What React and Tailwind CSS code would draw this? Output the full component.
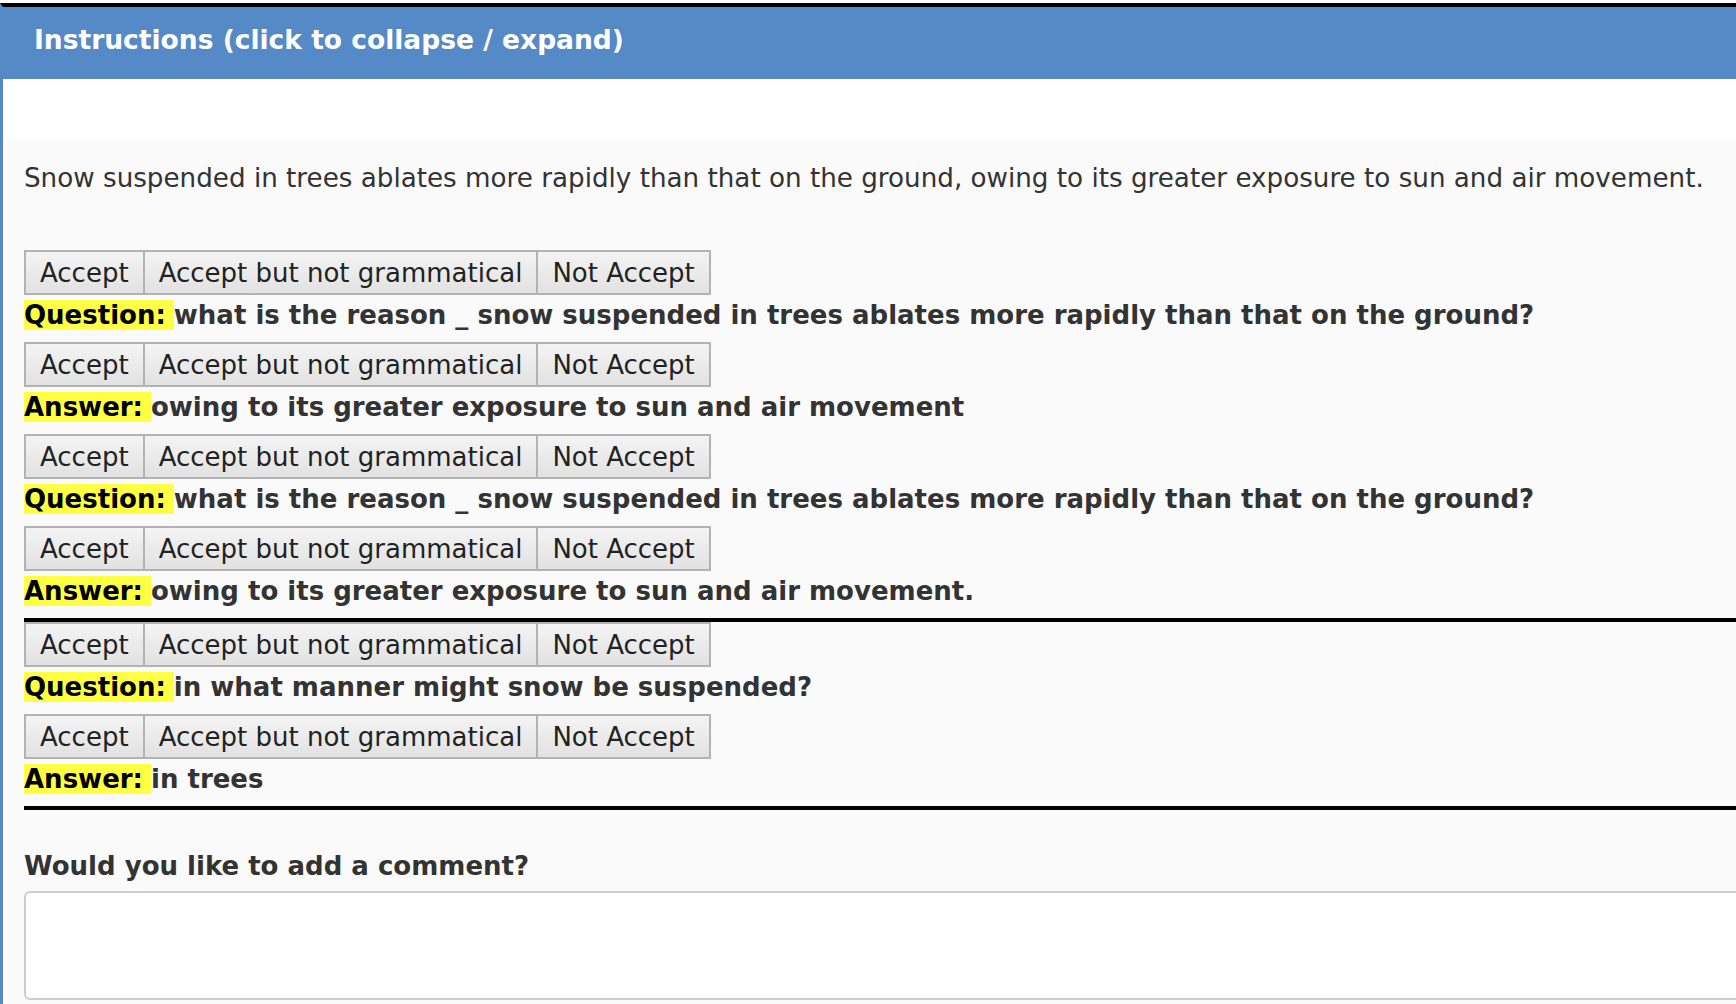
import React from 'react';

const ITEMS = [
  { label: 'Question:', text: 'what is the reason _ snow suspended in trees ablates more rapidly than that on the ground?' },
  { label: 'Answer:', text: 'owing to its greater exposure to sun and air movement' },
  { label: 'Question:', text: 'what is the reason _ snow suspended in trees ablates more rapidly than that on the ground?' },
  { label: 'Answer:', text: 'owing to its greater exposure to sun and air movement.', rule: true },
  { label: 'Question:', text: 'in what manner might snow be suspended?' },
  { label: 'Answer:', text: 'in trees', rule: true },
];

const btn =
  'h-[45px] px-[14px] bg-gradient-to-b from-[#f4f4f4] to-[#e2e2e2] border-2 border-[#b3b3b3] -ml-[2px] first:ml-0 text-[26px] text-[#222] leading-none';

const Choice = () => (
  <div className="flex">
    <button className={btn}>Accept</button>
    <button className={btn}>Accept but not grammatical</button>
    <button className={btn}>Not Accept</button>
  </div>
);

const App = () => (
  <div
    className="w-[1736px] h-[1004px] overflow-hidden bg-white pt-[3px]"
    style={{ fontFamily: '"DejaVu Sans", Verdana, sans-serif' }}
  >
    <div className="border-t-[4px] border-black border-l-[3px] border-l-[#558ac6] h-full">
      <div className="h-[72px] bg-[#558ac6] flex items-center pl-[31px] pb-[6px]">
        <h2 className="text-white font-bold text-[26.5px]">Instructions (click to collapse / expand)</h2>
      </div>
      <div className="h-[60px] bg-white" />
      <div className="bg-[#fafafa] ml-[4px] pl-[17px] h-full">
        <p className="pt-[20px] text-[26.2px] text-[#333] whitespace-nowrap">
          Snow suspended in trees ablates more rapidly than that on the ground, owing to its greater exposure to sun and air movement.
        </p>
        <div className="mt-[52px]">
          {ITEMS.map((it, i) => (
            <div key={i}>
              <Choice />
              <div className="h-[47px] pt-[5px] whitespace-nowrap text-[26px] font-bold text-[#333] leading-[30px]">
                <span className="bg-[#ffff44] text-black pr-[8px]">{it.label}</span>
                {it.text}
              </div>
              {it.rule && <div className="h-[4px] bg-black" />}
            </div>
          ))}
        </div>
        <h3 className="mt-[37px] text-[26px] font-bold text-[#333]">Would you like to add a comment?</h3>
        <textarea className="mt-[5px] w-[1800px] h-[109px] border-2 border-[#ccc] rounded-[6px] bg-white block" />
      </div>
    </div>
  </div>
);

export default App;
